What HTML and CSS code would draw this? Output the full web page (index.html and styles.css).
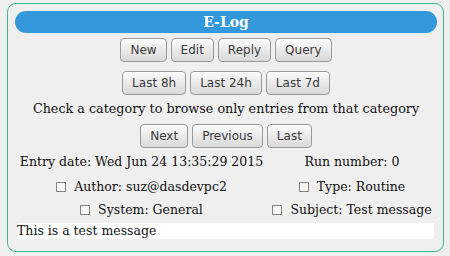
FILE: index.html
```html
<!DOCTYPE html>
<html>
<head>
<meta charset="utf-8">
<link rel="stylesheet" href="styles.css">
</head>
<body>
<div class="frame">
  <div class="title">E-Log</div>
  <div class="btnrow row1">
    <button class="btn">New</button>
    <button class="btn">Edit</button>
    <button class="btn">Reply</button>
    <button class="btn">Query</button>
  </div>
  <div class="btnrow row2">
    <button class="btn">Last 8h</button>
    <button class="btn">Last 24h</button>
    <button class="btn">Last 7d</button>
  </div>
  <div class="hint">Check a category to browse only entries from that category</div>
  <div class="btnrow row3">
    <button class="btn">Next</button>
    <button class="btn">Previous</button>
    <button class="btn">Last</button>
  </div>
  <table class="attrs">
    <tr class="r-date">
      <td class="c1">Entry date: Wed Jun 24 13:35:29 2015</td>
      <td class="c2">Run number: 0</td>
    </tr>
    <tr class="r-a">
      <td class="c1"><span class="cb"></span>Author: suz@dasdevpc2</td>
      <td class="c2"><span class="cb"></span>Type: Routine</td>
    </tr>
    <tr class="r-b">
      <td class="c1"><span class="cb"></span>System: General</td>
      <td class="c2"><span class="cb"></span>Subject: Test message</td>
    </tr>
  </table>
  <div class="msg">This is a test message</div>
</div>
</body>
</html>
```

FILE: styles.css
```css
html, body {
  margin: 0;
  padding: 0;
  background: #efefef;
}
body {
  font-family: "DejaVu Serif", serif;
  font-size: 12.5px;
  color: #111;
}
.frame {
  box-sizing: border-box;
  margin: 3px 0 0 7px;
  width: 437px;
  height: 249px;
  border: 1px solid #3dbb8c;
  border-radius: 9px;
  padding: 7px 6px 0 7px;
}
.title {
  height: 22px;
  line-height: 22px;
  background: #3398dc;
  border-radius: 11px;
  color: #fff;
  text-align: center;
  font-weight: bold;
  font-size: 14px;
}
.btnrow {
  display: flex;
  justify-content: center;
  gap: 4px;
}
.row1 { margin-top: 5px; }
.row2 { margin-top: 9px; }
.row3 { margin-top: 1px; }
.btn {
  font-family: "DejaVu Sans", sans-serif;
  font-size: 12px;
  color: #3a3a3a;
  height: 24px;
  padding: 0 9px;
  border: 1px solid #999;
  border-radius: 4px;
  background: linear-gradient(#fbfbfb, #d9d9d9);
  box-shadow: inset 0 1px 0 #fff;
}
.hint {
  text-align: center;
  height: 28px;
  line-height: 28px;
  font-size: 12.75px;
}
.attrs {
  width: 421px;
  margin-top: 1px;
  border-collapse: collapse;
}
.attrs td {
  padding: 0;
  text-align: center;
  white-space: nowrap;
}
.attrs .c1 { width: 253px; }
.r-date td { height: 25px; }
.r-a td { height: 24px; }
.r-b td { height: 22px; }
.cb {
  display: inline-block;
  box-sizing: border-box;
  width: 10px;
  height: 10px;
  border: 1px solid #8a8682;
  background: #f6f6f6;
  margin-right: 8px;
  vertical-align: -1px;
}
.msg {
  margin: 3px 0 0 2px;
  width: 417px;
  height: 16px;
  line-height: 16px;
  background: #fff;
}
```
